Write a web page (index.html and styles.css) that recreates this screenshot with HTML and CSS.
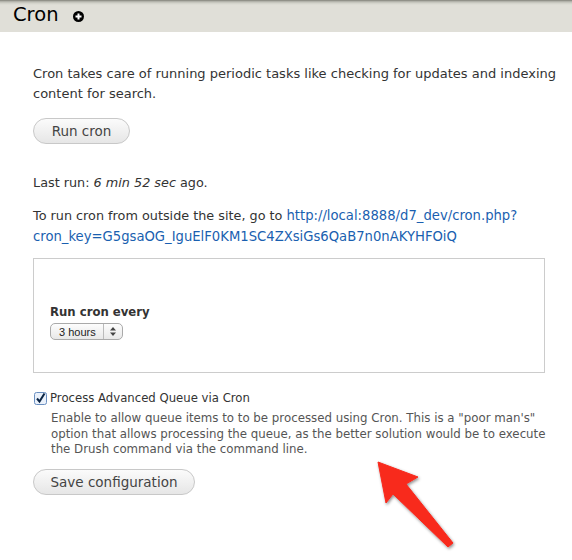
FILE: index.html
```html
<!DOCTYPE html>
<html>
<head>
<meta charset="utf-8">
<link rel="stylesheet" href="styles.css">
</head>
<body>
<div class="header">
  <h1 class="title">Cron</h1>
  <span class="plus"><svg width="11" height="11" viewBox="0 0 11 11"><circle cx="5.5" cy="5.5" r="5.5" fill="#000"/><rect x="2.5" y="4.5" width="6" height="2" fill="#fff"/><rect x="4.5" y="2.5" width="2" height="6" fill="#fff"/></svg></span>
</div>
<div class="content">
  <p class="intro">Cron takes care of running periodic tasks like checking for updates and indexing content for search.</p>
  <button class="btn btn-run">Run cron</button>
  <p class="last">Last run: <em>6 min 52 sec</em> ago.</p>
  <p class="outside">To run cron from outside the site, go to <a href="#">http://local:8888/d7_dev/cron.php?<br>cron_key=G5gsaOG_IguElF0KM1SC4ZXsiGs6QaB7n0nAKYHFOiQ</a></p>
  <div class="fieldset">
    <label class="fs-label">Run cron every</label>
    <div class="select"><span class="sel-text">3 hours</span><span class="sel-arrows"><svg width="6" height="9" viewBox="0 0 6 9"><path d="M0 3.5 L3 0 L6 3.5 Z M0 5.5 L3 9 L6 5.5 Z" fill="#444"/></svg></span></div>
  </div>
  <div class="check-row">
    <span class="checkbox"><svg width="13" height="13" viewBox="0 0 13 13"><rect x="0.5" y="0.5" width="12" height="12" rx="2" fill="#eaf1fb" stroke="#6a8fc0"/><path d="M3 6.5 L5.5 9.5 L10.5 1.5" stroke="#0b2545" stroke-width="2" fill="none"/></svg></span>
    <span class="check-label">Process Advanced Queue via Cron</span>
  </div>
  <p class="desc">Enable to allow queue items to to be processed using Cron. This is a "poor man's" option that allows processing the queue, as the better solution would be to execute the Drush command via the command line.</p>
  <button class="btn btn-save">Save configuration</button>
</div>
<svg class="arrow" width="110" height="110" viewBox="0 0 110 110">
  <defs><filter id="sh" x="-20%" y="-20%" width="140%" height="140%"><feDropShadow dx="1" dy="1.5" stdDeviation="1.5" flood-color="#000" flood-opacity="0.45"/></filter></defs>
  <path d="M18 12 L58 27 L46 34 L93 93 L88 97 L33 44 L26 53 Z" fill="#f82a1d" stroke="#f82a1d" stroke-width="1" stroke-linejoin="round" filter="url(#sh)"/>
</svg>
</body>
</html>
```
FILE: styles.css
```css
html, body { margin: 0; padding: 0; background: #fff; }
body { font-family: "DejaVu Sans", sans-serif; color: #333; width: 572px; height: 560px; overflow: hidden; position: relative; }
.header { height: 32px; background: linear-gradient(to bottom, #7a7a72 0, #a8a8a0 1px, #d0d0c8 3px, #e0dfd8 5px, #e0dfd8 100%); display: flex; align-items: center; padding-left: 13px; box-sizing: border-box; }
.title { margin: 0; font-size: 19.5px; font-weight: normal; color: #000; line-height: 24px; margin-top: -3px; }
.plus { display: inline-flex; margin-left: 14px; margin-top: 1px; }
.content { padding: 32px 0 0 33px; width: 530px; }
p { margin: 0; }
.intro { font-size: 13px; line-height: 20px; }
.btn { font-family: "DejaVu Sans", sans-serif; font-size: 13.5px; color: #444; background: linear-gradient(to bottom, #fbfbfb, #e6e6e6); border: 1px solid #c8c8c8; border-radius: 13px; height: 26px; padding: 0; display: block; }
.btn-run { margin-top: 14px; width: 97px; }
.btn-save { margin-top: 11px; width: 162px; }
.last { font-size: 12.8px; margin-top: 29px; line-height: 20px; }
.outside { font-size: 12.8px; margin-top: 12px; line-height: 21px; }
a { color: #1a5fb0; text-decoration: none; font-size: 13.2px; }
.fieldset { border: 1px solid #ccc; margin-top: 11px; width: 512px; height: 115px; box-sizing: border-box; padding: 45px 0 0 16px; }
.fs-label { font-weight: bold; font-size: 11.7px; display: block; color: #333; line-height: 16px; }
.select { margin-top: 3px; display: inline-flex; align-items: center; width: 73px; height: 17px; box-sizing: border-box; border: 1px solid #aaa; border-radius: 5px; background: linear-gradient(to bottom, #fdfdfd, #e8e8e8); font-family: "Liberation Sans", sans-serif; font-size: 11px; color: #222; }
.sel-text { flex: 1; padding-left: 8px; }
.sel-arrows { width: 18px; border-left: 1px solid #bbb; height: 100%; display: flex; align-items: center; justify-content: center; }
.check-row { display: flex; align-items: center; margin-top: 17px; }
.checkbox { display: inline-flex; margin-left: 1px; }
.check-label { font-size: 11.7px; margin-left: 3px; line-height: 16px; }
.desc { font-size: 11.8px; color: #555; margin-left: 18px; margin-top: 5px; line-height: 15.5px; width: 505px; }
.arrow { position: absolute; left: 360px; top: 450px; }
```
